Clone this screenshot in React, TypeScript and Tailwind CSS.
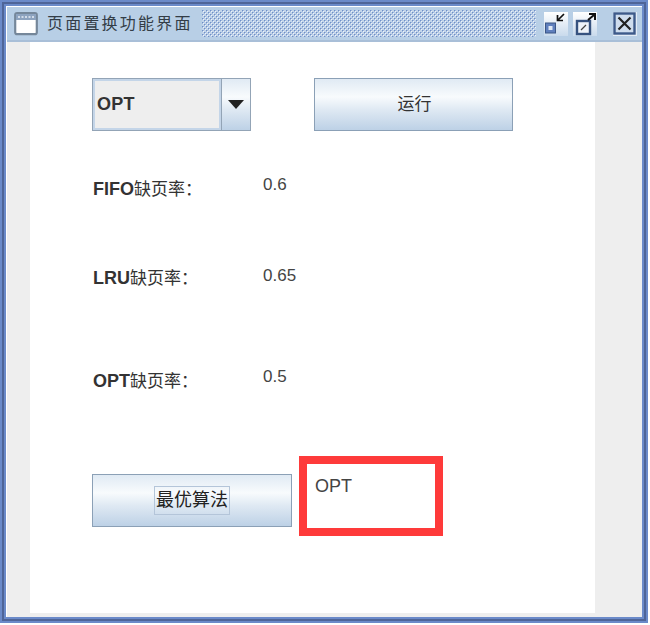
const font = "[font-family:'Liberation_Sans','Noto_Sans_CJK_SC',sans-serif]";

function Dots() {
  return (
    <svg className="h-[27px] flex-1" aria-hidden="true">
      <defs>
        <pattern id="d" width="4" height="4" patternUnits="userSpaceOnUse">
          <rect width="4" height="4" fill="#c3d5ea" />
          <rect x="0" y="0" width="1.4" height="1.4" fill="#6f8fc8" />
          <rect x="2" y="2" width="1.4" height="1.4" fill="#6f8fc8" />
          <rect x="1" y="1" width="1" height="1" fill="#eef3fa" />
          <rect x="3" y="3" width="1" height="1" fill="#eef3fa" />
        </pattern>
      </defs>
      <rect width="100%" height="100%" fill="url(#d)" />
    </svg>
  );
}

function WinIcon() {
  return (
    <svg width="24" height="24" viewBox="0 0 24 24" aria-hidden="true">
      <rect x="1.2" y="1.2" width="21.6" height="21" rx="2" fill="#fff" stroke="#75879a" strokeWidth="2.2" />
      <rect x="2" y="2" width="20" height="6" fill="#8da3bf" />
      <path d="M4 5h16" stroke="#e8eef6" strokeWidth="1.6" strokeDasharray="2 1.5" />
    </svg>
  );
}

function TitleButtons() {
  return (
    <div className="flex h-[25px] items-center">
      <svg width="24" height="24" viewBox="0 0 24 24" aria-hidden="true">
        <defs>
          <linearGradient id="tb" x1="0" y1="0" x2="0" y2="1">
            <stop offset="0" stopColor="#ffffff" />
            <stop offset="1" stopColor="#c9daec" />
          </linearGradient>
        </defs>
        <rect width="24" height="24" fill="url(#tb)" />
        <rect x="1.5" y="11" width="10" height="10" fill="#5f7fbd" stroke="#3b5686" />
        <rect x="4.5" y="14" width="4" height="4" fill="#dfe8f4" />
        <path d="M20 2l-6 6M13.5 3v5.5H19" fill="none" stroke="#111" strokeWidth="1.7" />
      </svg>
      <svg width="24" height="24" viewBox="0 0 24 24" className="ml-[5px]" aria-hidden="true">
        <rect width="24" height="24" fill="url(#tb)" />
        <rect x="4" y="9" width="13" height="13" fill="#eef3f9" stroke="#36527f" strokeWidth="2.4" />
        <path d="M8 18l5-5" stroke="#444" strokeWidth="1.2" />
        <path d="M15 8l6-5M16 2h6v6" fill="none" stroke="#111" strokeWidth="2" />
      </svg>
      <svg width="24" height="24" viewBox="0 0 24 24" className="ml-[16px] mr-[5px]" aria-hidden="true">
        <rect width="24" height="24" fill="#e3ecf6" />
        <rect x="1.5" y="1.5" width="20" height="20" fill="#cfddee" stroke="#3d5a8a" strokeWidth="2.4" />
        <path d="M5.5 5.5l12 12M17.5 5.5l-12 12" stroke="#222" strokeWidth="2.2" />
      </svg>
    </div>
  );
}

function JButton({ className, children }: { className: string; children: React.ReactNode }) {
  return (
    <div
      className={`flex h-[53px] items-center justify-center border border-[#8ba0b6] bg-[linear-gradient(#e0eaf4_0%,#f8fbfd_35%,#dfe9f3_60%,#bdd1e6_100%)] text-[#333] ${className}`}
    >
      {children}
    </div>
  );
}

function Rate({ label, value, height, labelTop, valueTop }: { label: string; value: string; height: string; labelTop: string; valueTop: string }) {
  const [latin, cjk] = label.split("|");
  return (
    <div className={`flex ${height}`}>
      <div className={`ml-px w-[170px] text-[17px] leading-[20px] text-[#333] ${labelTop}`}>
        <span className="text-[18px] font-bold">{latin}</span>
        <span>{cjk}</span>
      </div>
      <div className={`text-[17px] leading-[20px] text-[#444] ${valueTop}`}>{value}</div>
    </div>
  );
}

export default function App() {
  return (
    <div className={`h-[625px] w-[650px] overflow-hidden bg-white ${font}`}>
      <div className="h-[623px] w-[648px] border-2 border-[#6b8ac9]">
        <div className="h-full border-2 border-[#4f6598]">
          <div className="h-full border-2 border-[#6b8ac9]">
            <div className="flex h-full flex-col border-t border-l border-white">
              <div className="flex h-[35px] shrink-0 items-center border-b-[2px] border-[#a9bfd8] bg-[#b8cfe6] pl-[7px]">
                <WinIcon />
                <span className="ml-[9px] mr-[9px] text-[16px] tracking-[2.2px] text-[#333d47]">页面置换功能界面</span>
                <Dots />
                <div className="ml-[8px]">
                  <TitleButtons />
                </div>
              </div>
              <div className="flex min-h-0 flex-1 bg-[#eeeeee]">
                <div className="ml-[23px] h-[571px] w-[565px] bg-white pl-[62px] pt-[36px]">
                  <div className="flex h-[53px]">
                    <div className="flex h-[53px] w-[159px] border border-[#93a4b6]">
                      <div className="flex flex-1 items-center border-2 border-[#c4d5e8] bg-[#eeeeee] pl-[2px] text-[18px] font-bold tracking-[0.3px] text-[#333]">
                        OPT
                      </div>
                      <div className="flex w-[29px] items-center justify-center border-l border-[#93a4b6] bg-[linear-gradient(#e0eaf4_0%,#f8fbfd_35%,#dfe9f3_60%,#bdd1e6_100%)]">
                        <svg width="16" height="9" viewBox="0 0 16 9" aria-hidden="true">
                          <path d="M0 0h16L8 9z" fill="#222" />
                        </svg>
                      </div>
                    </div>
                    <JButton className="ml-[63px] w-[199px] pl-[2px] text-[17px]">运行</JButton>
                  </div>
                  <Rate label="FIFO|缺页率：" value="0.6" height="h-[91px]" labelTop="mt-[48px]" valueTop="mt-[44px]" />
                  <Rate label="LRU|缺页率：" value="0.65" height="h-[103px]" labelTop="mt-[46px]" valueTop="mt-[44px]" />
                  <Rate label="OPT|缺页率：" value="0.5" height="h-[131px]" labelTop="mt-[46px]" valueTop="mt-[42px]" />
                  <div className="flex items-start">
                    <JButton className="mt-[18px] w-[200px] text-[18px]">
                      <span className="border border-[#b4c5d9] px-[1px] leading-[27px] text-[#222]">最优算法</span>
                    </JButton>
                    <div className="ml-[7px] h-[80px] w-[144px] border-[8px] border-[#fe3a3a] bg-white pl-[8px] pt-[12px] text-[18px] leading-[20px] text-[#444]">
                      OPT
                    </div>
                  </div>
                </div>
              </div>
            </div>
          </div>
        </div>
      </div>
    </div>
  );
}
